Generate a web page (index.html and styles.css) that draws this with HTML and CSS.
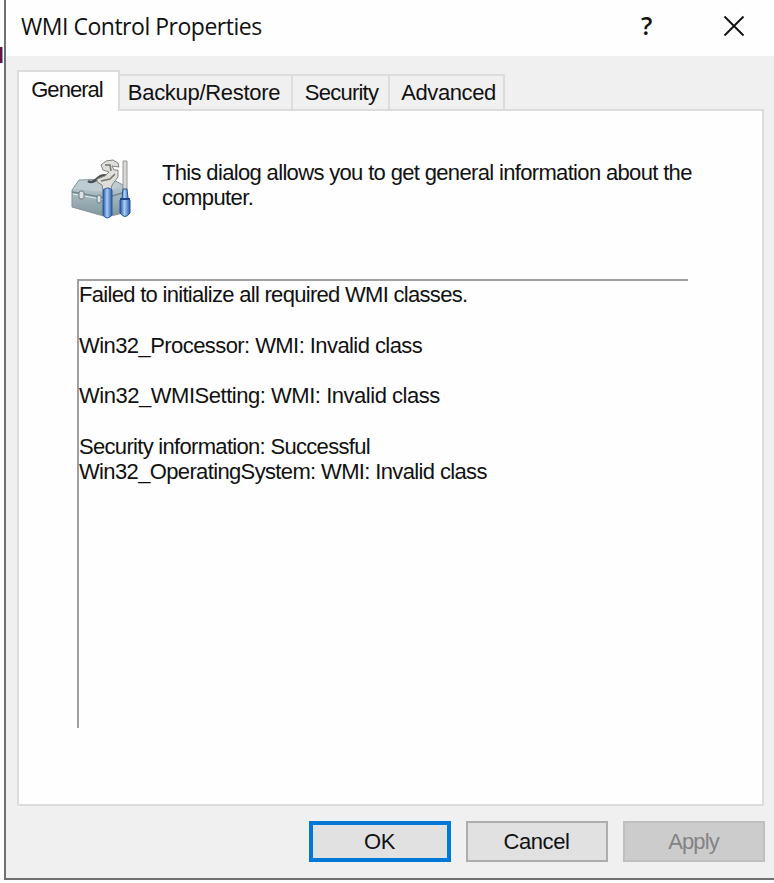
FILE: index.html
```html
<!DOCTYPE html>
<html lang="en">
<head>
    <meta charset="UTF-8">
    <meta name="viewport" content="width=device-width, initial-scale=1.0">
    <title>WMI Control Properties</title>
    <link rel="stylesheet" href="styles.css">
</head>
<body>
    <div class="behind"><span class="behind-text">d</span></div>
    <div class="dialog">
        <div class="titlebar">
            <span class="title">WMI Control Properties</span>
            <span class="help">?</span>
            <svg class="close" width="22" height="22" viewBox="0 0 22 22">
                <path d="M1.5 1.5L20.5 20.5M20.5 1.5L1.5 20.5" fill="none" stroke="#111" stroke-width="1.9"/>
            </svg>
        </div>
        <div class="content">
            <div class="tabs">
                <div class="tab active"><span class="t-general">General</span></div>
                <div class="tab backup"><span class="t-backup">Backup/Restore</span></div>
                <div class="tab security"><span class="t-security">Security</span></div>
                <div class="tab advanced"><span class="t-advanced">Advanced</span></div>
            </div>
            <div class="panel">
                <div class="intro">
                    <svg class="toolbox" width="64" height="64" viewBox="0 0 64 64">
                        <defs>
                            <linearGradient id="box" x1="0" y1="0" x2="0" y2="1">
                                <stop offset="0" stop-color="#c3d1d7"/>
                                <stop offset="1" stop-color="#7e959d"/>
                            </linearGradient>
                            <linearGradient id="handle" x1="0" y1="0" x2="1" y2="0">
                                <stop offset="0" stop-color="#23559f"/>
                                <stop offset="0.45" stop-color="#a9cdf4"/>
                                <stop offset="1" stop-color="#2459ab"/>
                            </linearGradient>
                        </defs>
                        <!-- box -->
                        <path d="M2 31L9 21L42 20L53 26V54L37 58L2 48Z" fill="url(#box)" stroke="#849399"/>
                        <path d="M3 30L10 22L41 21L51 27L36 33Z" fill="#bdccd2"/>
                        <path d="M2 33L36 39L52 34" fill="none" stroke="#71868f" stroke-width="1.5"/>
                        <path d="M3 35L36 41" stroke="#e2eaed"/>
                        <path d="M18 22Q22 25 28 19Q32 15 37 17" fill="none" stroke="#4b5052" stroke-width="2.5"/>
                        <rect x="9" y="32" width="5" height="8" rx="2" fill="#dce3e5" stroke="#6b7a80"/>
                        <rect x="27" y="36" width="4" height="8" rx="2" fill="#dce3e5" stroke="#6b7a80"/>
                        <!-- wrench -->
                        <path d="M27 20L35 17L39 13L33 11L31 6L36 2L43 1L48 4L49 8L42 7L44 11L48 11L48 18L42 26L41 31H33L32 26L27 23Z" fill="#dededb" stroke="#85837f"/>
                        <path d="M35 6L40 6L41 12M31 22L40 20L45 15" fill="none" stroke="#77736f" stroke-width="1.5"/>
                        <path d="M33 31Q38 27 42 31V56Q37 62 33 56Z" fill="url(#handle)" stroke="#2859a3"/>
                        <!-- screwdriver -->
                        <path d="M53 2H57V31H53Z" fill="#d8d8d5" stroke="#999894"/>
                        <path d="M53 30H57L58 39L60 41V54Q55 61 50 54V41L52 39Z" fill="url(#handle)" stroke="#235298"/>
                        <path d="M50 40H60" stroke="#1d478c" stroke-width="2"/>
                    </svg>
                    <p class="intro-text">
                        <span class="i-first">This dialog allows you to get general information about the</span><br>
                        <span class="i-second">computer.</span>
                    </p>
                </div>
                <div class="output">
                    <div class="line l-failed">Failed to initialize all required WMI classes.</div>
                    <div class="line">&nbsp;</div>
                    <div class="line l-processor">Win32_Processor: WMI: Invalid class</div>
                    <div class="line">&nbsp;</div>
                    <div class="line l-setting">Win32_WMISetting: WMI: Invalid class</div>
                    <div class="line">&nbsp;</div>
                    <div class="line l-info">Security information: Successful</div>
                    <div class="line l-system">Win32_OperatingSystem: WMI: Invalid class</div>
                </div>
            </div>
            <div class="buttons">
                <button class="btn default">OK</button>
                <button class="btn cancel">Cancel</button>
                <button class="btn apply" disabled>Apply</button>
            </div>
        </div>
    </div>
</body>
</html>
```
FILE: styles.css
```css
* {
    box-sizing: border-box;
}
body {
    margin: 0;
    width: 774px;
    height: 883px;
    display: flex;
    overflow: hidden;
    background-color: #fefefe;
    color: #111;
    font-family: "Liberation Sans", Arial, sans-serif;
    font-size: 22px;
}
/* sliver of the window underneath */
.behind {
    width: 4px;
    height: 883px;
    padding-top: 43px;
    display: flex;
    justify-content: flex-end;
    align-items: flex-start;
    overflow: hidden;
}
.behind-text {
    color: #651536;
    font-weight: bold;
    line-height: 25px;
}
.dialog {
    width: 770px;
    height: 880px;
    flex: none;
    display: flex;
    flex-direction: column;
    border-left: 2px solid #707070;
    border-bottom: 2px solid #707070;
    background-color: #f0f0f0;
}
.titlebar {
    height: 56px;
    flex: none;
    display: flex;
    align-items: center;
    padding: 0 29px 4px 15px;
    background-color: #fefefe;
}
.title {
    flex: 1;
    font-family: "Open Sans", "Noto Sans", sans-serif;
    font-size: 23px;
    letter-spacing: -0.48px;
    white-space: nowrap;
}
.help {
    width: 12px;
    margin: -3px 70px 0 0;
    font-family: "Open Sans", "Noto Sans", sans-serif;
    font-size: 25px;
    font-weight: 600;
}
.content {
    flex: 1;
    padding: 14px 9px 0 11px;
}
.tabs {
    height: 40px;
    display: flex;
    align-items: flex-end;
    white-space: nowrap;
}
.tab {
    height: 36px;
    display: flex;
    align-items: center;
    justify-content: center;
    border: 2px solid #dcdcdc;
    border-left: none;
    border-bottom: none;
}
.active {
    position: relative;
    z-index: 1;
    width: 103px;
    height: 41px;
    margin-bottom: -1px;
    padding-bottom: 4px;
    border-left: 2px solid #dcdcdc;
    background-color: #fefefe;
}
.backup {
    width: 173px;
}
.security {
    width: 97px;
}
.advanced {
    width: 115px;
}
.t-general {
    padding-right: 3px;
    letter-spacing: -0.95px;
}
.t-backup {
    padding-right: 3px;
    letter-spacing: -0.3px;
}
.t-security {
    padding-left: 2px;
    letter-spacing: -0.75px;
}
.t-advanced {
    padding-left: 4px;
    letter-spacing: -0.4px;
}
.panel {
    width: 747px;
    height: 697px;
    margin-top: -1px;
    padding: 48px 0 0 51px;
    border: 2px solid #dcdcdc;
    background-color: #fefefe;
}
.intro {
    height: 120px;
    display: flex;
}
.intro-text {
    margin: 1px 0 0 28px;
    line-height: 25px;
    white-space: nowrap;
}
.i-first {
    letter-spacing: -0.66px;
}
.i-second {
    letter-spacing: -0.6px;
}
.output {
    width: 611px;
    height: 449px;
    margin-left: 7px;
    padding-top: 1px;
    border-top: 2px solid #a0a0a0;
    border-left: 2px solid #a0a0a0;
}
.line {
    height: 25.3px;
    line-height: 25.3px;
    white-space: nowrap;
}
.l-failed {
    letter-spacing: -0.7px;
}
.l-processor {
    letter-spacing: -0.57px;
}
.l-setting {
    letter-spacing: -0.47px;
}
.l-info {
    letter-spacing: -0.69px;
}
.l-system {
    letter-spacing: -0.64px;
}
.buttons {
    display: flex;
    justify-content: flex-end;
    gap: 15px;
    margin-top: 15px;
}
.btn {
    width: 142px;
    height: 41px;
    padding: 1px 1px 0 0;
    border: 2px solid #adadad;
    background-color: #e1e1e1;
    color: #111;
    font: inherit;
    letter-spacing: -0.4px;
}
.default {
    border: 4px solid #0078d7;
}
.apply {
    border-color: #bfbfbf;
    background-color: #cccccc;
    color: #838383;
    letter-spacing: -0.9px;
}
```
